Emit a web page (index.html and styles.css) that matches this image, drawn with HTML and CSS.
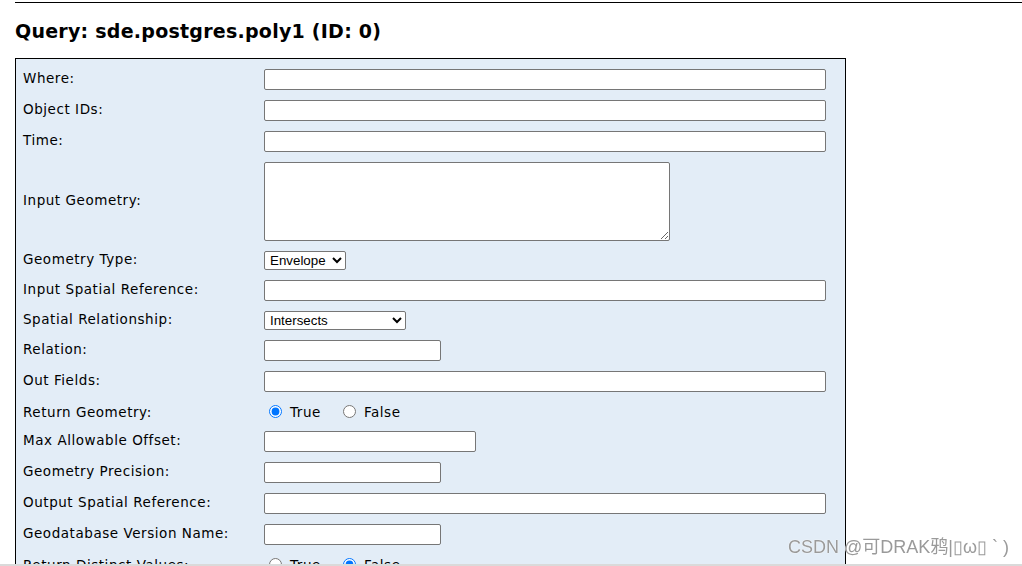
FILE: index.html
```html
<!DOCTYPE html>
<html>
<head>
<meta charset="utf-8">
<link rel="stylesheet" href="styles.css">
</head>
<body>
<div class="page">
  <div class="rule"></div>
  <h2 class="title">Query: sde.postgres.poly1 (ID: 0)</h2>
  <div class="form">
    <div class="lbl">Where:</div>
    <div class="fld"><input class="txt full" type="text"></div>

    <div class="lbl">Object IDs:</div>
    <div class="fld"><input class="txt full" type="text"></div>

    <div class="lbl">Time:</div>
    <div class="fld"><input class="txt full" type="text"></div>

    <div class="lbl">Input Geometry:</div>
    <div class="fld"><textarea class="area"></textarea></div>

    <div class="lbl">Geometry Type:</div>
    <div class="fld"><select class="sel sel-geom"><option>Envelope</option></select></div>

    <div class="lbl">Input Spatial Reference:</div>
    <div class="fld"><input class="txt full" type="text"></div>

    <div class="lbl">Spatial Relationship:</div>
    <div class="fld"><select class="sel sel-rel"><option>Intersects</option></select></div>

    <div class="lbl">Relation:</div>
    <div class="fld"><input class="txt short" type="text"></div>

    <div class="lbl">Out Fields:</div>
    <div class="fld"><input class="txt full" type="text"></div>

    <div class="lbl radio-row">Return Geometry:</div>
    <div class="fld radio-row">
      <label class="opt"><input type="radio" name="rg" checked> True</label>
      <label class="opt"><input type="radio" name="rg"> False</label>
    </div>

    <div class="lbl">Max Allowable Offset:</div>
    <div class="fld"><input class="txt medium" type="text"></div>

    <div class="lbl">Geometry Precision:</div>
    <div class="fld"><input class="txt short" type="text"></div>

    <div class="lbl">Output Spatial Reference:</div>
    <div class="fld"><input class="txt full" type="text"></div>

    <div class="lbl">Geodatabase Version Name:</div>
    <div class="fld"><input class="txt short" type="text"></div>

    <div class="lbl radio-row">Return Distinct Values:</div>
    <div class="fld radio-row">
      <label class="opt"><input type="radio" name="rd"> True</label>
      <label class="opt"><input type="radio" name="rd" checked> False</label>
    </div>
  </div>
</div>
<div class="scrollbar"></div>
<div class="watermark">CSDN @可DRAK鸦|▯ω▯ ` )</div>
</body>
</html>
```

FILE: styles.css
```css
html, body {
  margin: 0;
  padding: 0;
  background: #ffffff;
  overflow: hidden;
}

body {
  font-family: "DejaVu Sans", Verdana, sans-serif;
  color: #000;
}

.page {
  padding-left: 15px;
}

.rule {
  margin-top: 2px;
  border-top: 1px solid #000;
}

.title {
  margin: 17px 0 0 0;
  font-size: 19px;
  letter-spacing: 0.25px;
  font-weight: bold;
  line-height: 22px;
  height: 38px;
}

.form {
  width: 831px;
  box-sizing: border-box;
  border: 1px solid #000;
  background: #e3edf7;
  padding: 10px 18px 10px 7px;
  display: grid;
  grid-template-columns: 241px 562px;
  row-gap: 10px;
  align-items: center;
}

.lbl {
  font-size: 13.5px;
  letter-spacing: 0.55px;
  line-height: 16px;
  padding-bottom: 3px;
  white-space: nowrap;
}

.fld {
  display: flex;
  align-items: center;
}

.txt {
  box-sizing: border-box;
  height: 21px;
  margin: 0;
  padding: 1px 2px;
  border: 1px solid #767676;
  border-radius: 2px;
  background: #fff;
  font-family: "Liberation Sans", Arial, sans-serif;
  font-size: 13.33px;
}

.full { width: 562px; }
.medium { width: 212px; }
.short { width: 177px; }

.area {
  box-sizing: border-box;
  width: 406px;
  height: 79px;
  margin: 0;
  border: 1px solid #767676;
  border-radius: 2px;
  background: #fff;
  display: block;
}

.sel {
  box-sizing: border-box;
  height: 19px;
  margin: 0;
  padding: 0 0 0 1px;
  border: 1px solid #767676;
  border-radius: 2px;
  background: #fff;
  font-family: "Liberation Sans", Arial, sans-serif;
  font-size: 13.33px;
  color: #000;
}

.sel-geom { width: 82px; }
.sel-rel { width: 142px; }

.radio-row {
  height: 19px;
  display: flex;
  align-items: center;
}

.lbl.radio-row {
  padding-bottom: 0;
  height: 19px;
}

.opt {
  display: inline-flex;
  align-items: center;
  margin-right: 17px;
  font-size: 13.5px;
  letter-spacing: 0.55px;
}

.opt input {
  width: 13px;
  height: 13px;
  margin: 0 8px 0 5px;
  accent-color: #0075ff;
}

.scrollbar {
  position: fixed;
  left: 0;
  right: 0;
  bottom: 0;
  height: 2px;
  background: #dadada;
}

.watermark {
  position: fixed;
  left: 788px;
  top: 532px;
  font-family: "Liberation Sans", "Noto Sans CJK SC", sans-serif;
  font-size: 18px;
  color: #9a9a9a;
  text-shadow: 0 0 1px #fff, 0 0 1px #fff;
  white-space: nowrap;
}
```
